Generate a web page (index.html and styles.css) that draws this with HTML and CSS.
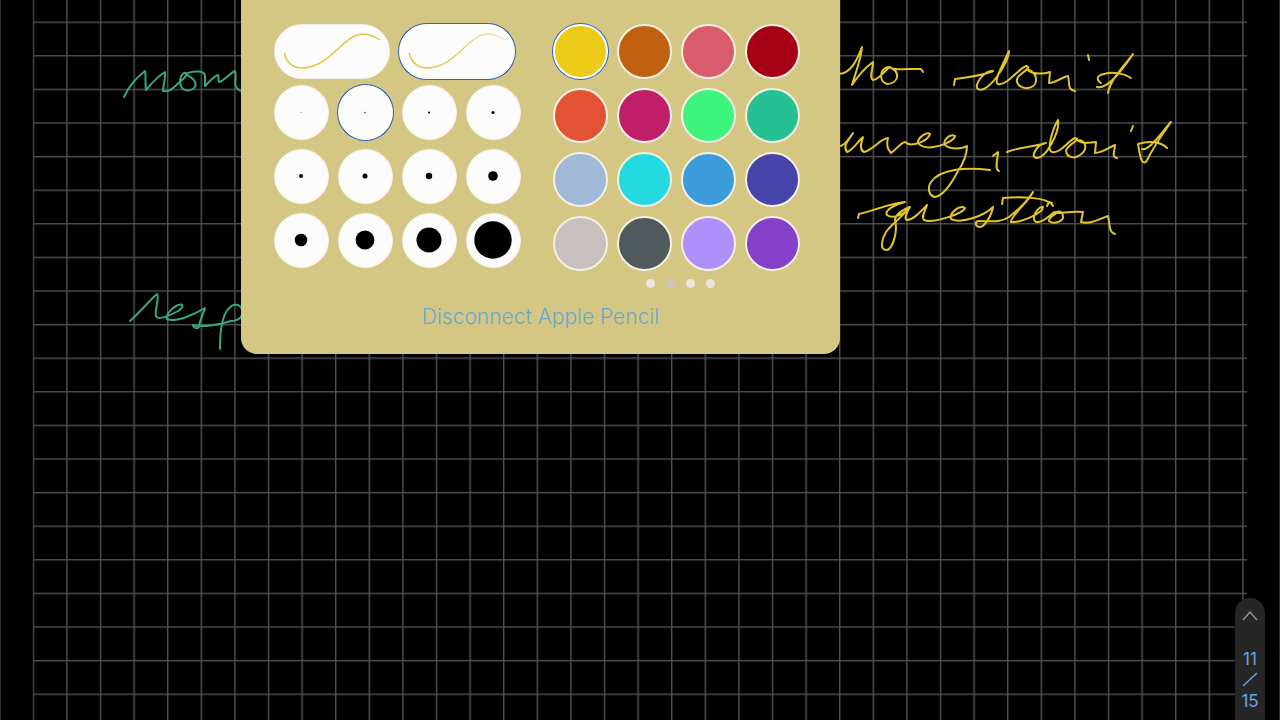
FILE: index.html
```html
<!DOCTYPE html>
<html lang="en">
<head>
  <meta charset="UTF-8" />
  <meta name="viewport" content="width=device-width, initial-scale=1.0"/>
  <title>Notes</title>
  <link rel="stylesheet" href="styles.css">
</head>
<body>
  <main class="board">
    <svg class="paper" role="img" aria-label="Handwritten notes">
      <defs>
        <pattern id="columns" x="32.6" width="33.6" height="40" patternUnits="userSpaceOnUse">
          <rect width="1.4" height="40" fill="#525252"/>
        </pattern>
        <pattern id="rows" y="21.5" width="40" height="33.6" patternUnits="userSpaceOnUse">
          <rect width="40" height="1.4" fill="#525252"/>
        </pattern>
      </defs>
      <svg width="100%" height="100%">
        <rect width="1" height="100%" fill="#303030"/>
        <rect x="32.6" width="1212" height="100%" fill="url(#columns)"/>
        <rect x="33" width="1214" height="100%" fill="url(#rows)"/>
        <rect x="1279" width="1" height="100%" fill="#303030"/>
      </svg>
      <g class="ink green">
        <path d="M124 97C128 88 136 78 145 71C146 75 145 84 146 90C151 84 158 76 165 72C166 78 163 85 163 91C170 93 176 85 182 80C187 76 188 72 184 73C179 76 179 85 183 89C189 93 198 88 195 82C193 76 184 76 188 73C193 71 205 70 205 76L205 86C209 82 214 76 218 75C219 78 218 80 219 82C224 81 230 73 235 71C237 76 234 84 236 87C238 90 240 91 244 92"/>
        <path d="M130 321C140 312 150 300 157 294C160 296 154 312 156 316C158 321 171 315 178 311C184 307 184 303 178 305C171 308 165 316 167 319C176 323 195 314 205 308C203 315 199 322 199 327C197 330 193 327 193 325C203 328 222 324 231 321C243 321 246 310 238 305C229 303 224 314 222 324C220 332 220 342 220 349"/>
      </g>
      <g class="ink yellow">
        <path d="M838 74C852 74 858 57 862 47C861 60 855 74 852 85C858 76 866 67 873 62C873 69 869 78 873 80C880 79 885 70 890 67C881 66 877 81 887 84C898 84 902 72 889 67C893 70 900 69 921 69L923 72"/>
        <path d="M954 85L955 79C967 77 983 76 993 71C984 70 973 86 978 89C987 95 1009 63 1009 51C1003 64 993 82 998 84C1007 86 1018 69 1026 66C1033 67 1021 73 1018 77C1014 84 1022 89 1028 88C1038 87 1040 74 1027 69C1032 75 1044 74 1050 72L1049 83C1056 83 1062 77 1068 76C1070 83 1067 90 1075 91"/>
        <path d="M1088 55L1089 60M1101 83C1095 79 1098 75 1104 74C1114 71 1125 74 1131 78M1097 87C1106 89 1117 78 1133 54C1124 66 1110 80 1108 93"/>
        <path d="M841 146C847 143 850 137 853 133C849 140 842 146 847 152C853 150 858 141 863 137C861 143 859 150 864 152C873 150 881 138 888 138C886 145 888 150 891 153C896 150 900 143 905 142C911 148 928 141 930 134C926 131 917 139 918 143C926 153 954 143 955 136C949 133 942 142 945 145C951 150 962 149 967 146C967 157 961 167 957 173C951 184 943 196 935 197C929 196 927 188 931 182C940 169 965 167 990 170"/>
        <path d="M993 156L998 152C998 158 994 169 999 171"/>
        <path d="M1007 152C1019 147 1034 147 1046 143C1037 144 1029 158 1037 158C1046 158 1060 132 1058 120C1053 128 1046 150 1052 152C1060 154 1068 141 1075 138C1083 139 1066 145 1066 151C1067 158 1075 159 1080 155C1090 148 1084 139 1077 140C1083 145 1090 142 1096 142L1095 153C1102 153 1108 148 1115 145C1115 151 1111 157 1117 158"/>
        <path d="M1133 126L1131 131M1142 149C1149 151 1161 133 1171 122C1158 140 1151 152 1146 162C1141 165 1140 155 1138 144C1150 140 1161 142 1167 148"/>
        <path d="M858 218L859 214C870 212 890 203 905 202C896 204 884 210 887 215C893 220 907 213 909 207C904 210 896 213 895 219C898 232 893 248 887 250C878 250 883 237 886 232C891 225 902 217 910 207C906 213 904 220 907 220C914 220 921 211 927 205C925 211 921 217 924 220C933 224 964 213 965 208C959 204 949 214 951 219C961 224 984 216 993 207C992 214 985 227 980 227C974 226 975 221 979 221C991 221 1000 223 1009 217C1018 210 1028 200 1033 192C1029 201 1010 217 1011 222C1021 223 1043 213 1043 207C1038 206 1030 219 1036 222C1044 223 1049 215 1055 212C1062 212 1048 216 1049 221C1054 225 1064 221 1063 216C1062 210 1057 211 1055 213C1063 213 1073 211 1083 212L1081 222C1091 225 1101 218 1108 216C1110 222 1108 232 1115 234"/>
        <path d="M1002 204L1003 198C1016 197 1048 196 1053 206M1047 206L1049 202L1052 203"/>
      </g>
    </svg>

    <form class="popover" aria-label="Apple Pencil settings">
      <div class="tools">
        <fieldset class="pens">
          <label class="option"><input type="radio" name="pen" aria-label="Even stroke">
            <svg viewBox="0 0 114 53"><path d="M9 28C12 38 18 43 27 43C57 42 67 9 89 9C95 9 100 12 105 15" fill="none" stroke="#e3c235" stroke-width="1.4"/></svg>
          </label>
          <label class="option"><input type="radio" name="pen" aria-label="Tapered stroke" checked>
            <svg viewBox="0 0 114 53">
              <defs><linearGradient id="taper"><stop stop-color="#e3c020"/><stop offset=".55" stop-color="#e8cd58"/><stop offset="1" stop-color="#f2e6b4"/></linearGradient></defs>
              <path d="M9 28C12 38 18 43 27 43C57 42 67 9 89 9C95 9 100 12 105 15" fill="none" stroke="url(#taper)" stroke-width="1.3"/>
            </svg>
          </label>
        </fieldset>
        <fieldset class="sizes">
          <label class="option"><input type="radio" name="size" aria-label="Size 1"><svg viewBox="0 0 53 53"><circle cx="26" cy="26.5" r=".4"/></svg></label>
          <label class="option"><input type="radio" name="size" aria-label="Size 2" checked><svg viewBox="0 0 53 53"><circle cx="26" cy="26.5" r=".7"/></svg></label>
          <label class="option"><input type="radio" name="size" aria-label="Size 3"><svg viewBox="0 0 53 53"><circle cx="26" cy="26.5" r="1.1"/></svg></label>
          <label class="option"><input type="radio" name="size" aria-label="Size 4"><svg viewBox="0 0 53 53"><circle cx="26" cy="26.5" r="1.5"/></svg></label>
          <label class="option"><input type="radio" name="size" aria-label="Size 5"><svg viewBox="0 0 53 53"><circle cx="26" cy="26" r="2"/></svg></label>
          <label class="option"><input type="radio" name="size" aria-label="Size 6"><svg viewBox="0 0 53 53"><circle cx="26" cy="26" r="2.5"/></svg></label>
          <label class="option"><input type="radio" name="size" aria-label="Size 7"><svg viewBox="0 0 53 53"><circle cx="26" cy="26" r="3.2"/></svg></label>
          <label class="option"><input type="radio" name="size" aria-label="Size 8"><svg viewBox="0 0 53 53"><circle cx="26" cy="26" r="4.8"/></svg></label>
          <label class="option"><input type="radio" name="size" aria-label="Size 9"><svg viewBox="0 0 53 53"><circle cx="26" cy="26" r="6.3"/></svg></label>
          <label class="option"><input type="radio" name="size" aria-label="Size 10"><svg viewBox="0 0 53 53"><circle cx="26" cy="26" r="9.4"/></svg></label>
          <label class="option"><input type="radio" name="size" aria-label="Size 11"><svg viewBox="0 0 53 53"><circle cx="26" cy="26" r="12.5"/></svg></label>
          <label class="option"><input type="radio" name="size" aria-label="Size 12"><svg viewBox="0 0 53 53"><circle cx="26" cy="26" r="18.7"/></svg></label>
        </fieldset>
      </div>

      <div class="palette">
        <fieldset class="colors">
          <input type="radio" name="color" aria-label="Yellow" style="background-color: #ecca18" checked>
          <input type="radio" name="color" aria-label="Brown" style="background-color: #c06010">
          <input type="radio" name="color" aria-label="Pink" style="background-color: #d85c6c">
          <input type="radio" name="color" aria-label="Dark red" style="background-color: #a50014">
          <input type="radio" name="color" aria-label="Orange" style="background-color: #e25233">
          <input type="radio" name="color" aria-label="Magenta" style="background-color: #c01e68">
          <input type="radio" name="color" aria-label="Green" style="background-color: #3df57c">
          <input type="radio" name="color" aria-label="Teal" style="background-color: #26c193">
          <input type="radio" name="color" aria-label="Light blue" style="background-color: #9fb9d7">
          <input type="radio" name="color" aria-label="Cyan" style="background-color: #23dae0">
          <input type="radio" name="color" aria-label="Blue" style="background-color: #3c9bd9">
          <input type="radio" name="color" aria-label="Indigo" style="background-color: #4545a9">
          <input type="radio" name="color" aria-label="Gray" style="background-color: #c6c1be">
          <input type="radio" name="color" aria-label="Slate" style="background-color: #505a5c">
          <input type="radio" name="color" aria-label="Lavender" style="background-color: #ae90fb">
          <input type="radio" name="color" aria-label="Purple" style="background-color: #863fc8">
        </fieldset>
        <div class="dots">
          <button type="button" aria-label="Palette 1"></button>
          <button type="button" aria-label="Palette 2" class="current"></button>
          <button type="button" aria-label="Palette 3"></button>
          <button type="button" aria-label="Palette 4"></button>
        </div>
      </div>

      <button type="button" class="disconnect">Disconnect Apple Pencil</button>
    </form>

    <nav class="pager" aria-label="Pages">
      <button type="button" aria-label="Previous page">
        <svg width="18" height="12" viewBox="0 0 18 12"><path d="M2 10L9 2L16 10" fill="none" stroke="#999" stroke-width="1.3"/></svg>
      </button>
      <span>11</span>
      <svg width="16" height="20" viewBox="0 0 16 20"><path d="M1 16L15 3" fill="none" stroke="#6ca5e8" stroke-width="1.4"/></svg>
      <span>15</span>
    </nav>
  </main>
</body>
</html>
```

FILE: styles.css
```css
* {
  box-sizing: border-box;
}
body {
  margin: 0;
  background: #000;
  font-family: Inter, "Liberation Sans", sans-serif;
}
.board {
  position: relative;
  height: 100vh;
  overflow: hidden;
}
.paper {
  display: block;
  width: 100%;
  height: 100%;
}
.ink {
  fill: none;
  stroke-width: 2;
  stroke-linecap: round;
  stroke-linejoin: round;
}
.green {
  stroke: #35a880;
}
.yellow {
  stroke: #e2c52c;
}
fieldset {
  border: 0;
  margin: 0;
  padding: 0;
  min-width: 0;
}
button {
  border: 0;
  padding: 0;
  background: none;
  font: inherit;
  cursor: pointer;
}

.popover {
  position: absolute;
  top: 0;
  left: 241px;
  display: grid;
  grid-template-columns: auto auto;
  column-gap: 32px;
  padding: 24px 33px 22px;
  border-radius: 0 0 16px 16px;
  background: #d4c783;
}
.tools {
  display: flex;
  flex-direction: column;
  gap: 6px;
}
.palette {
  padding-right: 7px;
}
.pens {
  display: flex;
  gap: 9px;
}
.sizes, .colors {
  display: grid;
  grid-template-columns: repeat(4, 55px);
  gap: 9px;
}
.option {
  display: block;
  height: 55px;
  border: 1px solid #f5efe9;
  border-radius: 28px;
  background: #fcfcfc;
  cursor: pointer;
}
.pens .option {
  width: 116px;
}
.option input {
  position: absolute;
  opacity: 0;
}
.option svg {
  display: block;
  width: 100%;
  height: 100%;
}
.option:has(:checked) {
  border-color: #fcfcfc;
  box-shadow: 0 0 0 1px #2f62b8;
}
.colors {
  row-gap: 9px;
}
.colors input {
  appearance: none;
  width: 55px;
  height: 55px;
  margin: 0;
  border: 2px solid #f6f0e4;
  border-radius: 50%;
  cursor: pointer;
}
.colors input:checked {
  border-color: #fff;
  box-shadow: 0 0 0 1px #2f62b8;
}
.dots {
  display: flex;
  justify-content: center;
  gap: 11px;
  padding: 8px 0 0 7px;
}
.dots button {
  width: 9px;
  height: 9px;
  border-radius: 50%;
  background: #ebe5de;
}
.dots .current {
  background: #cbc6bd;
}
.disconnect {
  grid-column: 1 / -1;
  justify-self: center;
  margin-top: 14px;
  font-size: 21px;
  font-weight: 300;
  line-height: 30px;
  color: #68a8cf;
}

/* page counter */
.pager {
  position: absolute;
  right: 15px;
  bottom: 0;
  width: 30px;
  padding: 12px 0 8px;
  display: flex;
  flex-direction: column;
  align-items: center;
  border-radius: 15px 15px 0 0;
  background: #262626;
  color: #6ca5e8;
  font-size: 17px;
  line-height: 22px;
}
.pager button {
  height: 38px;
  display: flex;
  align-items: flex-start;
}
```
